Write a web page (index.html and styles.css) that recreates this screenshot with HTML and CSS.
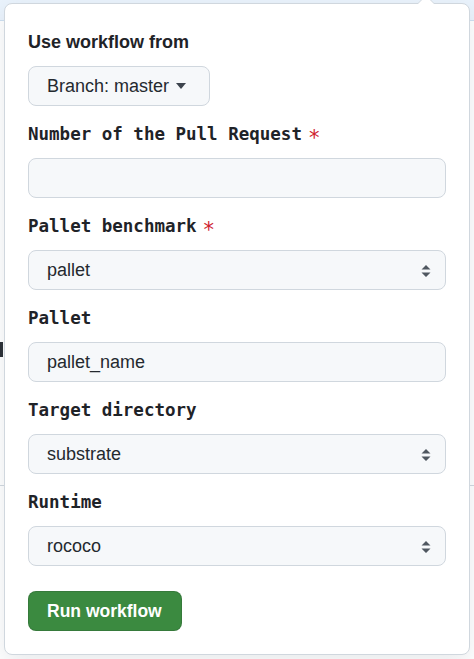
FILE: index.html
```html
<!DOCTYPE html>
<html lang="en">
<head>
<meta charset="utf-8">
<title>Run workflow</title>
<link rel="stylesheet" href="styles.css">
</head>
<body>
<div class="page">
  <div class="banner"></div>
  <div class="backdrop">
    <div class="mark"></div>
    <div class="rule"></div>
  </div>

  <form class="popover">
    <div class="group">
      <div class="label-sans">Use workflow from</div>
      <button type="button" class="branch-btn">
        <span>Branch: master</span>
        <svg class="caret" width="10" height="6" viewBox="0 0 10 6"><path d="M0 0h10L5 6z" fill="#3d444d"/></svg>
      </button>
    </div>

    <div class="group">
      <label class="label-mono" for="pr">Number of the Pull Request<span class="req">*</span></label>
      <input id="pr" class="field" type="text" value="">
    </div>

    <div class="group">
      <label class="label-mono" for="bench">Pallet benchmark<span class="req">*</span></label>
      <div class="select-wrap">
        <select id="bench" class="field select"><option>pallet</option></select>
        <svg class="updown" width="10" height="12" viewBox="0 0 10 12"><path d="M5 0l4.5 4.5h-9z M0.5 7.5h9L5 12z" fill="#4f5760"/></svg>
      </div>
    </div>

    <div class="group">
      <label class="label-mono" for="pallet">Pallet</label>
      <input id="pallet" class="field" type="text" value="pallet_name">
    </div>

    <div class="group">
      <label class="label-mono" for="target">Target directory</label>
      <div class="select-wrap">
        <select id="target" class="field select"><option>substrate</option></select>
        <svg class="updown" width="10" height="12" viewBox="0 0 10 12"><path d="M5 0l4.5 4.5h-9z M0.5 7.5h9L5 12z" fill="#4f5760"/></svg>
      </div>
    </div>

    <div class="group last">
      <label class="label-mono" for="runtime">Runtime</label>
      <div class="select-wrap">
        <select id="runtime" class="field select"><option>rococo</option></select>
        <svg class="updown" width="10" height="12" viewBox="0 0 10 12"><path d="M5 0l4.5 4.5h-9z M0.5 7.5h9L5 12z" fill="#4f5760"/></svg>
      </div>
    </div>

    <button type="button" class="run-btn">Run workflow</button>
  </form>
</div>
</body>
</html>
```

FILE: styles.css
```css
* { box-sizing: border-box; }

html, body {
  margin: 0;
  padding: 0;
  background: #ffffff;
}

body {
  font-family: "Liberation Sans", Arial, sans-serif;
  color: #24292f;
}

.page {
  position: relative;
  width: 474px;
  height: 659px;
  overflow: hidden;
}

.banner {
  height: 21px;
  background: #eaf3fc;
  border-bottom: 1px solid #cddff1;
}

.backdrop {
  display: flex;
  flex-direction: column;
}

.mark {
  margin-top: 321px;
  width: 3px;
  height: 15px;
  background: #24292f;
}

.rule {
  margin-top: 128px;
  height: 1px;
  background: #d0d7de;
}

.popover {
  position: absolute;
  top: 3px;
  left: 4px;
  width: 466px;
  margin: 0;
  padding: 26px 23px 23px;
  background: #ffffff;
  border: 1px solid #d0d7de;
  border-radius: 8px;
  box-shadow: 0 8px 24px rgba(140, 149, 159, 0.2);
  display: flex;
  flex-direction: column;
  align-items: flex-start;
}

.popover::before,
.popover::after {
  content: "";
  position: absolute;
  border-style: solid;
  border-color: transparent;
}

.popover::before {
  top: -18px;
  right: 34px;
  border-width: 9px;
  border-bottom-color: #d0d7de;
}

.popover::after {
  top: -16px;
  right: 35px;
  border-width: 8px;
  border-bottom-color: #ffffff;
}

.group {
  width: 100%;
  display: flex;
  flex-direction: column;
  align-items: flex-start;
  gap: 12px;
  margin-bottom: 16px;
}

.group.last {
  margin-bottom: 25px;
}

.label-sans {
  font-family: "Liberation Sans", Arial, sans-serif;
  font-weight: 700;
  font-size: 18px;
  line-height: 24px;
  color: #1f2328;
}

.label-mono {
  font-family: "DejaVu Sans Mono", "Liberation Mono", monospace;
  font-weight: 700;
  font-size: 17.5px;
  line-height: 24px;
  color: #1f2328;
  display: flex;
  align-items: center;
}

.req {
  color: #cf222e;
  margin-left: 7px;
  font-family: "DejaVu Sans", sans-serif;
  font-weight: 400;
  font-size: 21px;
  line-height: 1;
  transform: translateY(4px);
}

.branch-btn {
  height: 40px;
  width: 182px;
  padding: 0 20px 0 18px;
  display: flex;
  align-items: center;
  gap: 7px;
  background: #f6f8fa;
  border: 1px solid #d0d7de;
  border-radius: 8px;
  font-family: "Liberation Sans", Arial, sans-serif;
  font-size: 18px;
  color: #24292f;
  cursor: pointer;
}

.caret {
  display: block;
  flex: none;
}

.field {
  width: 100%;
  height: 40px;
  padding: 0 18px;
  background: #f6f8fa;
  border: 1px solid #d0d7de;
  border-radius: 8px;
  font-family: "Liberation Sans", Arial, sans-serif;
  font-size: 18px;
  color: #24292f;
  outline: none;
  margin: 0;
}

.select-wrap {
  position: relative;
  width: 100%;
}

.select {
  -webkit-appearance: none;
  appearance: none;
  display: block;
  padding-right: 40px;
}

.updown {
  position: absolute;
  right: 15px;
  top: 15px;
  pointer-events: none;
}

.run-btn {
  height: 40px;
  padding: 0 19px 0 18px;
  background: #3b8a40;
  border: 1px solid rgba(27, 31, 36, 0.15);
  border-radius: 8px;
  font-family: "Liberation Sans", Arial, sans-serif;
  font-weight: 700;
  font-size: 17.5px;
  color: #ffffff;
  cursor: pointer;
}
```
